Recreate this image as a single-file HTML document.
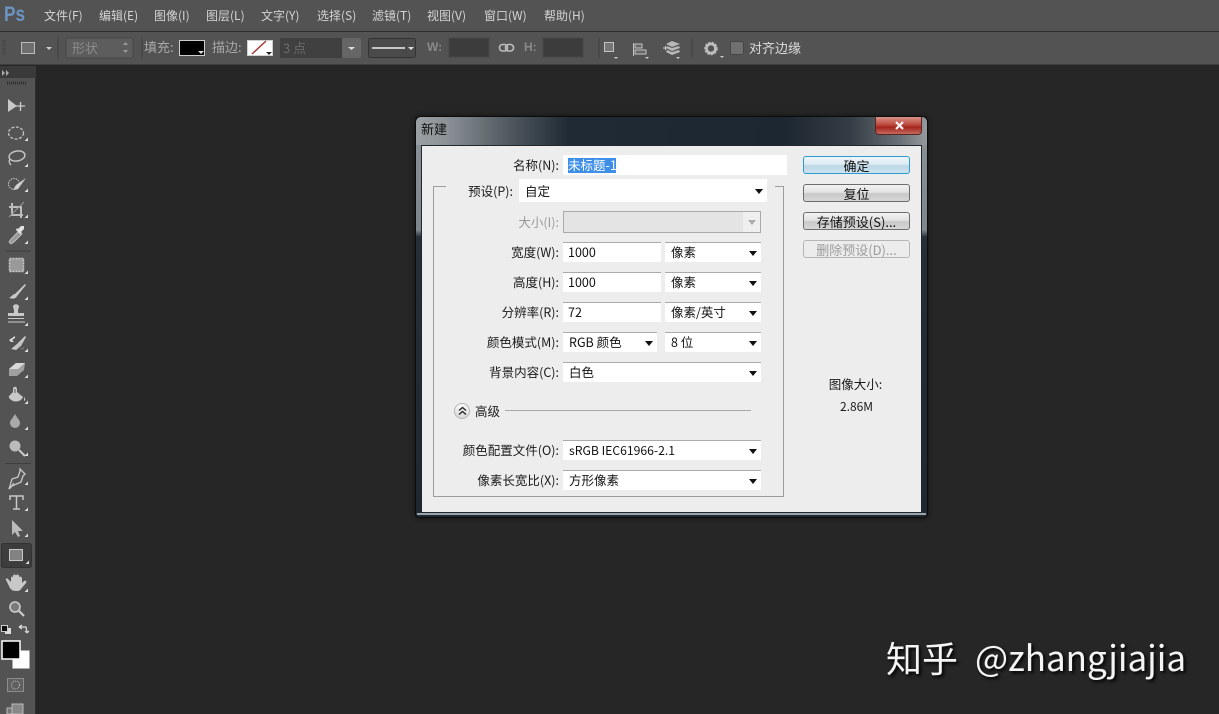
<!DOCTYPE html>
<html lang="zh"><head><meta charset="utf-8"><title>Photoshop 新建</title>
<style>
*{box-sizing:border-box}
html,body{margin:0;padding:0;width:1219px;height:714px;overflow:hidden;background:#262626}
body{position:relative;font-family:"Liberation Sans","Noto Sans CJK SC",sans-serif}
.a{position:absolute;white-space:nowrap}
.m{top:8px;font-size:12px;line-height:16px;color:#d4d4d4;font-family:"Noto Sans CJK SC",sans-serif}
.o{font-size:13px;line-height:16px;color:#a8a8a8;font-family:"Noto Sans CJK SC",sans-serif}
.l{font-size:12.5px;line-height:18px;color:#1a1a1a;text-align:right;font-family:"Noto Sans CJK SC",sans-serif;left:430px;width:129px}
.f{background:#fff;border-top:1px solid #aaa;height:20px;font-size:12.5px;line-height:18px;padding-left:6px;color:#111;font-family:"Noto Sans CJK SC",sans-serif}
.i{padding-left:5px}
.f b{position:absolute;right:4px;top:8px;width:0;height:0;border:4px solid transparent;border-top:5px solid #111;border-bottom:0}
.b{left:803px;width:107px;height:18px;border:1px solid #6d6d6d;border-radius:3px;background:linear-gradient(#f2f2f2 0,#e2e2e2 45%,#c9c9c9 55%,#d6d6d6 100%);font-size:13px;line-height:18px;text-align:center;color:#111;font-family:"Noto Sans CJK SC",sans-serif}
svg{position:absolute;overflow:visible}
.c{fill:#c8c8c8}
</style></head><body>
<div class="a" style="left:0;top:0;width:1219px;height:32px;background:#535353;border-bottom:1px solid #2c2c2c"></div>
<div class="a" style="left:4px;top:-1px;font:bold 21px/32px 'Liberation Sans',sans-serif;color:#6a95c2;transform:scaleX(.82);transform-origin:0 0">Ps</div>
<div class="a m" style="left:44px">文件(F)</div>
<div class="a m" style="left:99px">编辑(E)</div>
<div class="a m" style="left:154px">图像(I)</div>
<div class="a m" style="left:206px">图层(L)</div>
<div class="a m" style="left:261px">文字(Y)</div>
<div class="a m" style="left:317px">选择(S)</div>
<div class="a m" style="left:372px">滤镜(T)</div>
<div class="a m" style="left:427px">视图(V)</div>
<div class="a m" style="left:484px">窗口(W)</div>
<div class="a m" style="left:544px">帮助(H)</div>

<div class="a" style="left:0;top:32px;width:1219px;height:33px;background:#535353;border-bottom:1px solid #3d3d3d"></div>
<svg style="left:0;top:0" width="1219" height="66">
<path d="M3 40v16M5 40v16" stroke="#383838" stroke-width="1" stroke-dasharray="1 1"/>
<rect x="21.500" y="42.500" width="13" height="11" fill="#6f6f6f" stroke="#bdbdbd"/>
<path d="M46 47h6l-3 3z" fill="#ccc"/>
<path d="M58 38v20M142 38v20M599 38v20M692 38v20" stroke="#414141"/>
<rect x="66" y="38" width="67" height="20" rx="2" fill="#5d5d5d" stroke="#474747"/>
<path d="M123 45l2.500-3 2.500 3zM123 50l2.500 3 2.500-3z" fill="#9a9a9a"/>
<rect x="179.500" y="40.500" width="25" height="15" fill="#000" stroke="#cfcfcf"/>
<path d="M198 51h6l-3 3z" fill="#ddd"/>
<rect x="247.500" y="40.500" width="25" height="15" fill="#fff" stroke="#cfcfcf"/>
<path d="M252 54l14-13" stroke="#a8383c" stroke-width="1.500"/><path d="M266 52h6l-3 3z" fill="#222"/>
<rect x="280" y="38" width="81" height="20" rx="2" fill="#404040"/>
<rect x="342" y="38" width="19" height="20" rx="2" fill="#666"/><path d="M348 47h7l-3.500 3z" fill="#ddd"/>
<rect x="368.500" y="38.500" width="47" height="19" rx="2" fill="#4a4a4a" stroke="#333"/>
<path d="M372 48h33" stroke="#eee" stroke-width="1.500"/><path d="M408 47h6l-3 3z" fill="#ddd"/>
<rect x="449" y="38" width="40" height="19" fill="#3c3c3c" stroke="#474747"/>
<rect x="543" y="38" width="40" height="19" fill="#3c3c3c" stroke="#474747"/>
<g fill="none" stroke="#bdbdbd" stroke-width="1.600"><rect x="499.500" y="44.500" width="8" height="6.500" rx="3"/><rect x="505.500" y="44.500" width="8" height="6.500" rx="3"/></g>
<rect x="604.500" y="42.500" width="9" height="9" fill="#767676" stroke="#c4c4c4"/>
<path d="M633.500 43v13M635 44h7v4h-7zM635 50h11v4h-11z" fill="#666" stroke="#c4c4c4"/>
<path d="M663 48h5M665.500 46v4" stroke="#ccc"/>
<path d="M672 41l8 3-8 3-6-3zM672 48l7-2 1 2-8 3-6-3 1-2zM672 52l7-2 1 2-8 3-6-3 1-2z" fill="#b8b8b8"/>
<circle cx="711" cy="48.500" r="5" fill="none" stroke="#c0c0c0" stroke-width="3.400" stroke-dasharray="2 1"/><circle cx="711" cy="48.500" r="4.500" fill="none" stroke="#bdbdbd" stroke-width="2.500"/>
<path d="M614 57h4l-2 2zM645 57h4l-2 2zM676 57h4l-2 2zM720 56h4l-2 2z" fill="#ccc"/>
<rect x="730.500" y="41.500" width="13" height="13" rx="2" fill="#707070" stroke="#454545"/>
</svg>
<div class="a o" style="left:72px;top:40px;color:#8c8c8c">形状</div>
<div class="a o" style="left:144px;top:39px">填充:</div>
<div class="a o" style="left:212px;top:39px">描边:</div>
<div class="a o" style="left:283px;top:40px;color:#6a6a6a">3 点</div>
<div class="a" style="left:427px;top:39px;font:bold 12px/16px 'Liberation Sans';color:#8a8a8a">W:</div>
<div class="a" style="left:524px;top:39px;font:bold 12px/16px 'Liberation Sans';color:#8a8a8a">H:</div>
<div class="a o" style="left:749px;top:40px;color:#ddd">对齐边缘</div>

<div class="a" style="left:0;top:66px;width:36px;height:648px;background:#535353;border-right:1px solid #2e2e2e"></div>
<div class="a" style="left:0;top:66px;width:36px;height:12px;background:#3a3a3a"></div>
<svg style="left:0;top:0" width="36" height="714">
<path d="M2 70l3 3-3 3zM6 70l3 3-3 3z" fill="#aaa"/>
<path d="M7 83h19" stroke="#2f2f2f" stroke-width="3" stroke-dasharray="1 1"/>
<path d="M8 99l9 7-9 6z" class="c"/><path d="M16 106h9M20.500 102v9" stroke="#ccc" stroke-width="1.300"/>
<ellipse cx="16" cy="133" rx="7.500" ry="6" fill="none" stroke="#c4c4c4" stroke-width="1.300" stroke-dasharray="3 1.500"/>
<ellipse cx="17" cy="156" rx="8" ry="5" fill="none" stroke="#c4c4c4" stroke-width="1.500" transform="rotate(-10 17 156)"/><path d="M10 159c-2 3 0 5 1 6" fill="none" stroke="#c4c4c4" stroke-width="1.300"/>
<circle cx="14" cy="184" r="5.500" fill="none" stroke="#ccc" stroke-dasharray="1.500 1"/><path d="M26 178l-10 7-3 5 5-1z" fill="#d0d0d0"/>
<path d="M12 203v12h11M9 207h12v11" fill="none" stroke="#bdbdbd" stroke-width="2"/><path d="M9 217l15-15" stroke="#999"/>
<path d="M11 239l8-8 3 3-8 8-3 2-2-2z" fill="#9a9a9a" stroke="#ccc" stroke-width=".8"/><path d="M18 229l3-3 3 0 0 3-3 3 1 1-2 1-4-4 1-2z" fill="#e0e0e0"/>
<path d="M5 251h26" stroke="#3e3e3e"/>
<rect x="9.500" y="258.500" width="14" height="13" fill="#999" stroke="#ccc" stroke-width="1.500" stroke-dasharray="2 1"/>
<path d="M25 284l-10 10c-2 0-4 3-6 4 3 1 7 1 8-2l9-11z" class="c"/>
<path d="M13 306a3.500 3.500 0 0 1 6 0c0 2-1 3-1 5v2h6v3H8v-3h6v-2c0-2-1-3-1-5zM8 318h16v1H8z" class="c"/><path d="M8 322h17" stroke="#ccc"/>
<path d="M25 336l-8 8-6 5 5 1 5-4 5-9z" class="c"/><path d="M9 340l6-4v2l-3 2 2 2-3 0z" fill="#ddd"/><path d="M21 349l3-1M18 347l4-4" stroke="#aaa" stroke-dasharray="1 1"/>
<path d="M9 369l7-6h9l-1 7-7 6H9z" fill="#a0a0a0"/><path d="M9 369l7-6h9l-7 6z" fill="#d8d8d8"/>
<path d="M13 389c0-3 4-3 4 0v3l6 5c-2 5-9 6-13 2-2-2-1-3 0-4l3-3z" class="c"/><path d="M24 397c1 1 2 3 0 4z" class="c"/><path d="M15 389v4" stroke="#535353"/>
<path d="M15 414c2 4 5 6 5 9a5 5 0 0 1-10 0c0-3 3-5 5-9z" fill="#aaa"/>
<circle cx="15" cy="446" r="5.500" fill="#bbb"/><path d="M19 450l6 6" stroke="#ccc" stroke-width="2"/>
<path d="M5 463.500h26" stroke="#3e3e3e"/>
<path d="M20 469l5 5-2 2-2 6-9 4-3 3 3-10 6-2 2-6z" fill="#555" stroke="#c8c8c8" stroke-width="1.300"/><path d="M9 489l5-6" stroke="#ccc"/>
<path d="M10 500v-4h13v4M16.500 496v13M13 509h7" fill="none" stroke="#c8c8c8" stroke-width="1.500"/>
<path d="M12 520l11 11h-5l2 5-2 1-3-5-3 3z" fill="#bbb"/>
<rect x="1.500" y="543.500" width="30" height="24" rx="2" fill="#3d3d3d" stroke="#333"/>
<rect x="9.500" y="549.500" width="13" height="11" fill="#828282" stroke="#c8c8c8"/>
<path d="M11 578c0-2 2-2 2 0v3-5c0-2 3-2 3 0v5-5c0-2 3-2 3 0v6-4c0-2 2-2 3 0v5l2-2c2-1 3 0 2 2l-5 6c-1 2-3 2-5 2-4 0-6-2-7-5l-3-6c-1-2 1-2 2-1l3 3z" class="c"/>
<circle cx="15" cy="607" r="5" fill="#7a7a7a" stroke="#ccc" stroke-width="1.600"/><path d="M19 611l5 5" stroke="#ccc" stroke-width="2.200"/>
<path fill="#ddd" d="M28 141v-3.500l-3.500 3.500zM28 167v-3.500l-3.500 3.500zM28 192v-3.500l-3.500 3.500zM28 218v-3.500l-3.500 3.500zM28 244v-3.500l-3.500 3.500zM28 274v-3.500l-3.500 3.500zM28 300v-3.500l-3.500 3.500zM28 326v-3.500l-3.500 3.500zM28 352v-3.500l-3.500 3.500zM28 378v-3.500l-3.500 3.500zM28 404v-3.500l-3.500 3.500zM28 430v-3.500l-3.500 3.500zM28 456v-3.500l-3.500 3.500zM28 485v-3.500l-3.500 3.500zM28 511v-3.500l-3.500 3.500zM28 537v-3.500l-3.500 3.500zM29 564v-3.500l-3.500 3.500zM28 592v-3.500l-3.500 3.500z"/>
<rect x="5" y="628" width="6" height="6" fill="#ddd"/><rect x="1.500" y="625.500" width="6" height="6" fill="#111" stroke="#ccc"/>
<path d="M20 627l6 0 1 5M19 627l3-2M19 627l3 2M27 633l-2-2M27 633l2-2" fill="none" stroke="#ddd" stroke-width="1.200"/>
<rect x="12" y="650" width="18" height="19" fill="#fff" stroke="#555"/>
<rect x="2" y="641" width="18" height="18" fill="#000" stroke="#fff" stroke-width="1.500"/>
<rect x="7.500" y="678.500" width="16" height="13" fill="#606060" stroke="#8c8c8c"/><circle cx="15.500" cy="685" r="4" fill="none" stroke="#bbb" stroke-dasharray="1 1"/>
<rect x="7" y="708" width="8" height="6" fill="#777" stroke="#bbb"/><rect x="12" y="704" width="11" height="10" fill="#888" stroke="#bbb"/>
</svg>

<!-- Dialog -->
<div class="a" style="left:415px;top:116px;width:513px;height:402px;border-radius:6px 6px 4px 4px;border:1px solid #0c0c0c;background:linear-gradient(#8d9397 0,#7d868c 113px,#252f37 120px,#1e2830 100%);box-shadow:0 0 5px #111"></div>
<div class="a" style="left:416px;top:117px;width:511px;height:28px;border-radius:5px 5px 0 0;background:linear-gradient(90deg,#9aa0a3 0,#8b9195 6%,#515a61 18%,#1f2a34 30%,#1d2731 72%,#343d45 85%,#6c7378 95%,#959a9d 100%)"></div>
<div class="a" style="left:421px;top:121px;font:13px/16px 'Noto Sans CJK SC',sans-serif;color:#111">新建</div>
<div class="a" style="left:875px;top:117px;width:47px;height:18px;border:1px solid #5b2420;border-top:0;border-radius:0 0 4px 4px;background:linear-gradient(#d89288 0,#bd4a3f 45%,#a3251c 60%,#c46a5f 100%)"></div>
<svg style="left:895px;top:121px" width="10" height="9"><path d="M1 1l7 7M8 1L1 8" stroke="#f4f4f4" stroke-width="2.200"/></svg>
<div class="a" style="left:421px;top:145px;width:501px;height:368px;background:#ededed;border:1px solid #20282e"></div>
<div class="a" style="left:417px;top:513px;width:509px;height:2px;background:#98a3aa"></div>

<!-- group box -->
<div class="a" style="left:433px;top:186px;width:351px;height:311px;border:1px solid #9c9c9c"></div>
<div class="a" style="left:446px;top:184px;width:329px;height:5px;background:#ededed"></div>

<div class="a l" style="top:156px">名称(N):</div>
<div class="a f" style="left:563px;top:155px;width:224px;height:20px;border-top:0"></div>
<div class="a" style="left:568px;top:158px;width:48px;height:15px;background:#3e8fe8"></div>
<div class="a" style="left:568px;top:156px;font:12.5px/18px 'Noto Sans CJK SC',sans-serif;color:#fff">未标题-1</div>
<div class="a l" style="top:182px;left:384px;">预设(P):</div>
<div class="a f" style="left:519px;top:179px;width:248px;height:23px;border-top:0;line-height:24px"><b style="top:10px"></b>自定</div>
<div class="a l" style="top:213px;color:#9a9a9a">大小(I):</div>
<div class="a" style="left:563px;top:211px;width:198px;height:22px;border:1px solid #aaa;background:#e4e4e4"></div>
<div class="a" style="left:743px;top:212px;width:17px;height:20px;background:#efefef"></div>
<svg style="left:748px;top:220px" width="9" height="6"><path d="M0 0h8l-4 5z" fill="#aaa"/></svg>

<div class="a l" style="top:243px">宽度(W):</div>
<div class="a f i" style="left:563px;top:242px;width:98px;">1000</div>
<div class="a f" style="left:665px;top:242px;width:96px;">像素<b></b></div>
<div class="a l" style="top:273px">高度(H):</div>
<div class="a f i" style="left:563px;top:272px;width:98px;">1000</div>
<div class="a f" style="left:665px;top:272px;width:96px;">像素<b></b></div>
<div class="a l" style="top:303px">分辨率(R):</div>
<div class="a f i" style="left:563px;top:302px;width:98px;">72</div>
<div class="a f" style="left:665px;top:302px;width:96px;">像素/英寸<b></b></div>
<div class="a l" style="top:333px">颜色模式(M):</div>
<div class="a f" style="left:563px;top:332px;width:94px;">RGB 颜色<b></b></div>
<div class="a f" style="left:665px;top:332px;width:96px;">8 位<b></b></div>
<div class="a l" style="top:363px">背景内容(C):</div>
<div class="a f" style="left:563px;top:362px;width:198px;">白色<b></b></div>

<div class="a" style="left:454px;top:403px;width:16px;height:16px;border-radius:50%;background:linear-gradient(#fafafa,#d8d8d8);border:1px solid #b5b5b5"></div>
<svg style="left:458px;top:406px" width="9" height="10"><path d="M1 4.500l3.500-3 3.500 3M1 8.500l3.500-3 3.500 3" fill="none" stroke="#222" stroke-width="1.300"/></svg>
<div class="a" style="left:475px;top:402px;font:12.5px/18px 'Noto Sans CJK SC',sans-serif;color:#1a1a1a">高级</div>
<div class="a" style="left:505px;top:410px;width:246px;height:1px;background:#a8a8a8"></div>

<div class="a l" style="top:441px">颜色配置文件(O):</div>
<div class="a f" style="left:563px;top:440px;width:198px;font-size:12.2px">sRGB IEC61966-2.1<b></b></div>
<div class="a l" style="top:471px">像素长宽比(X):</div>
<div class="a f" style="left:563px;top:470px;width:198px;">方形像素<b></b></div>

<div class="a b" style="top:156px;border:1.500px solid #2f9ad0;background:linear-gradient(#eef6fa 0,#dcebf3 45%,#bcd7e6 55%,#cde2ee 100%)">确定</div>
<div class="a b" style="top:184px">复位</div>
<div class="a b" style="top:212px">存储预设(S)...</div>
<div class="a b" style="top:240px;color:#9c9c9c;border-color:#b5b5b5;background:#ececec">删除预设(D)...</div>
<div class="a" style="left:803px;top:375px;width:105px;text-align:center;font:12.5px/18px 'Noto Sans CJK SC',sans-serif;color:#1a1a1a">图像大小:</div>
<div class="a" style="left:803px;top:399px;width:107px;text-align:center;font:12px/16px 'Noto Sans CJK SC',sans-serif;color:#1a1a1a">2.86M</div>

<div class="a" style="left:886px;top:631px;font:36px/52px 'Noto Sans CJK SC',sans-serif;color:#f4f4f4;text-shadow:2px 2px 3px #000">知乎</div>
<div class="a" style="left:975px;top:631px;font:35px/52px 'Noto Sans CJK SC',sans-serif;color:#f4f4f4;text-shadow:2px 2px 3px #000">@zhangjiajia</div>
</body></html>
